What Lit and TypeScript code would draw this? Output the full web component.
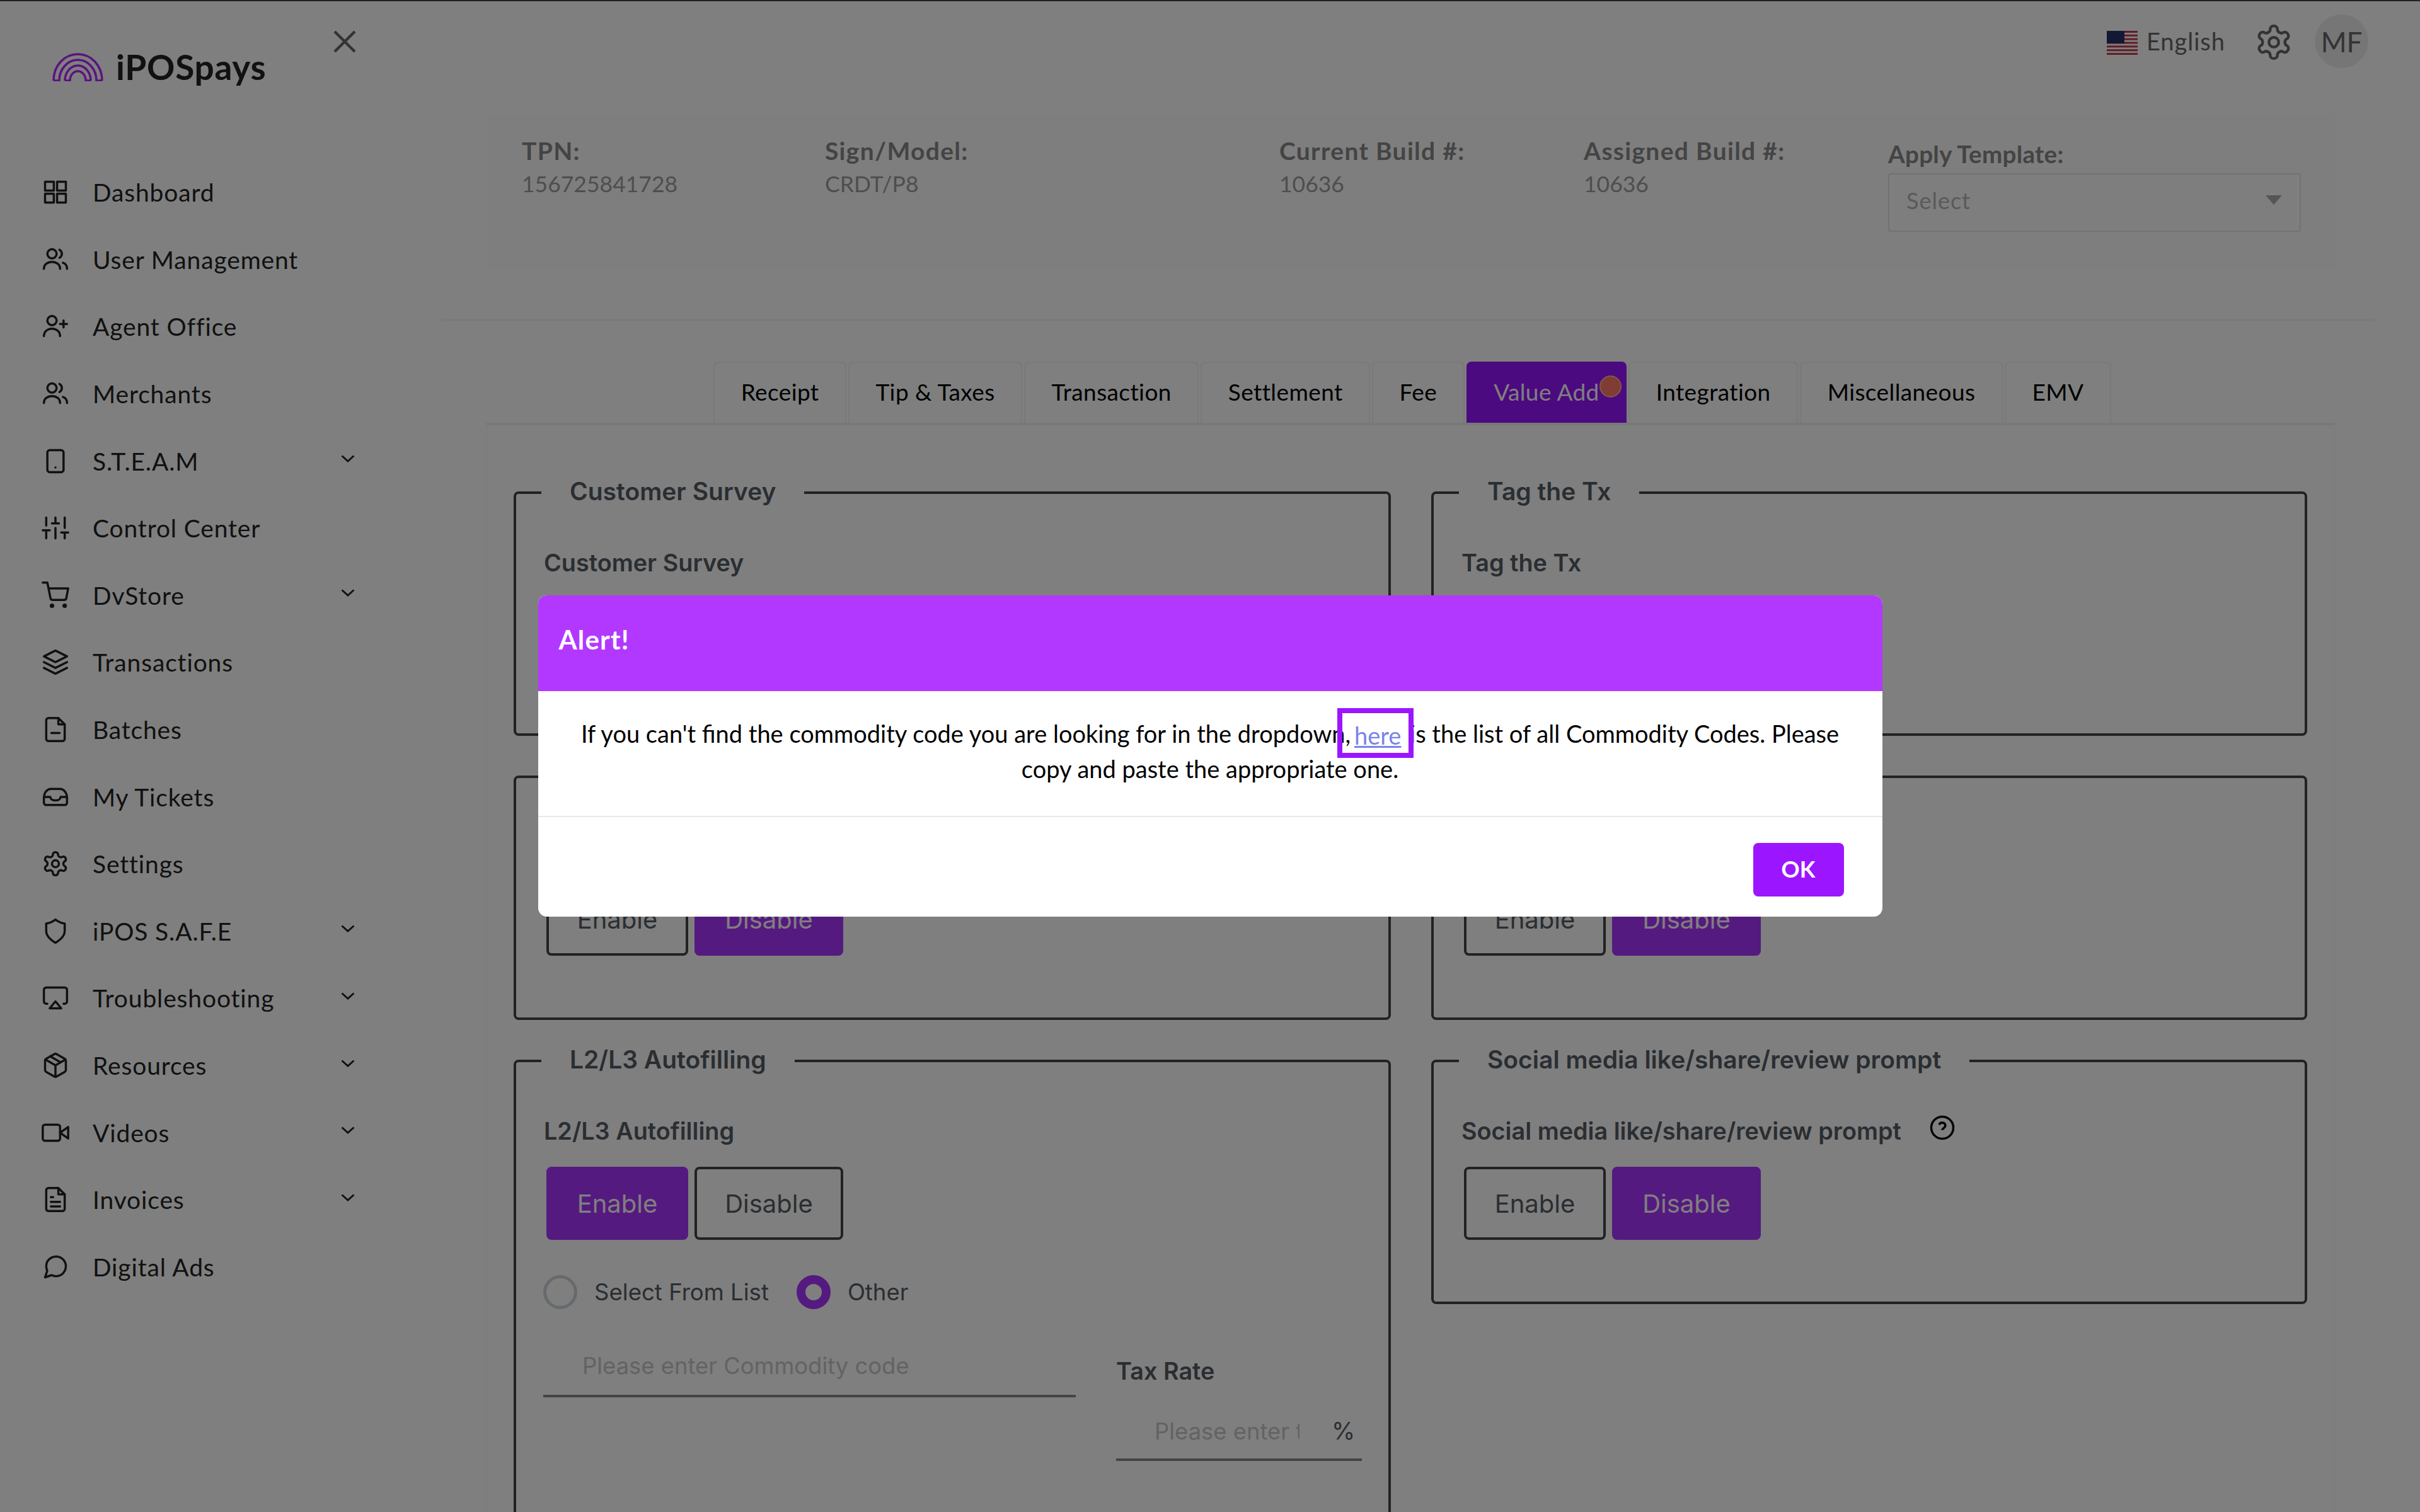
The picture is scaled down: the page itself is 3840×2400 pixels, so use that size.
import { LitElement, html, css, svg } from "lit";
import { customElement } from "lit/decorators.js";

const gear = svg`<path d="M12.22 2h-.44a2 2 0 0 0-2 2v.18a2 2 0 0 1-1 1.73l-.43.25a2 2 0 0 1-2 0l-.15-.08a2 2 0 0 0-2.73.73l-.22.38a2 2 0 0 0 .73 2.73l.15.1a2 2 0 0 1 1 1.72v.51a2 2 0 0 1-1 1.74l-.15.09a2 2 0 0 0-.73 2.73l.22.38a2 2 0 0 0 2.73.73l.15-.08a2 2 0 0 1 2 0l.43.25a2 2 0 0 1 1 1.73V20a2 2 0 0 0 2 2h.44a2 2 0 0 0 2-2v-.18a2 2 0 0 1 1-1.73l.43-.25a2 2 0 0 1 2 0l.15.08a2 2 0 0 0 2.73-.73l.22-.39a2 2 0 0 0-.73-2.73l-.15-.08a2 2 0 0 1-1-1.74v-.5a2 2 0 0 1 1-1.74l.15-.09a2 2 0 0 0 .73-2.73l-.22-.38a2 2 0 0 0-2.73-.73l-.15.08a2 2 0 0 1-2 0l-.43-.25a2 2 0 0 1-1-1.73V4a2 2 0 0 0-2-2z"/><circle cx="12" cy="12" r="3"/>`;
const users = svg`<circle cx="9" cy="7" r="4"/><path d="M2 20c0-3.6 3-6 7-6s7 2.4 7 6"/><path d="M18.5 14.8c2.2.6 3.5 2.6 3.5 5.2"/><path d="M15.5 3.5a4 4 0 0 1 0 7"/>`;

const icons: Record<string, unknown> = {
  dashboard: svg`<rect x="3" y="3" width="7.6" height="7.6"/><rect x="13.4" y="3" width="7.6" height="7.6"/><rect x="3" y="13.4" width="7.6" height="7.6"/><rect x="13.4" y="13.4" width="7.6" height="7.6"/>`,
  users,
  userPlus: svg`<circle cx="9" cy="7" r="4"/><path d="M2 20.5c0-3.8 3-6.5 7-6.5s7 2.7 7 6.5"/><path d="M19 7v6M16 10h6"/>`,
  tablet: svg`<rect x="5" y="2.5" width="14" height="19" rx="2"/><path d="M12 17.5h.01"/>`,
  sliders: svg`<path d="M4 21v-7M4 10V3M12 21v-9M12 8V3M20 21v-5M20 12V3M1 14h6M9 8h6M17 16h6"/>`,
  cart: svg`<circle cx="9" cy="21" r="1"/><circle cx="20" cy="21" r="1"/><path d="M1 1h4l2.68 13.39a2 2 0 0 0 2 1.61h9.72a2 2 0 0 0 2-1.61L23 6H6"/>`,
  layers: svg`<path d="M12 2 2 7l10 5 10-5z"/><path d="m2 17 10 5 10-5"/><path d="m2 12 10 5 10-5"/>`,
  batches: svg`<path d="M14.5 2H6a2 2 0 0 0-2 2v16a2 2 0 0 0 2 2h12a2 2 0 0 0 2-2V7.5z"/><path d="M14.5 2v5.5H20"/><path d="M8.5 15h7"/>`,
  inbox: svg`<path d="M2 17v-4c0-5 3-8 6-8h8c3 0 6 3 6 8v4a2 2 0 0 1-2 2H4a2 2 0 0 1-2-2z"/><path d="M2.5 12h5c.5 2.5 2 3 4.5 3s4-.5 4.5-3h5"/>`,
  gear,
  shield: svg`<path d="M12 22s8-4 8-10V5.5C17 5 14.500 4 12 2 9.500 4 7 5 4 5.500V12c0 6 8 10 8 10z"/>`,
  airplay: svg`<path d="M5 17H4a2 2 0 0 1-2-2V5a2 2 0 0 1 2-2h16a2 2 0 0 1 2 2v10a2 2 0 0 1-2 2h-1"/><path d="m12 15 5 6H7z"/>`,
  box: svg`<path d="M21 16V8a2 2 0 0 0-1-1.730l-7-4a2 2 0 0 0-2 0l-7 4A2 2 0 0 0 3 8v8a2 2 0 0 0 1 1.730l7 4a2 2 0 0 0 2 0l7-4A2 2 0 0 0 21 16z"/><path d="M3.300 7 12 12l8.700-5M12 22V12M7.500 4.200l9 5.200"/>`,
  video: svg`<path d="m23 7-7 5 7 5z"/><rect x="1" y="5" width="15" height="14" rx="2"/>`,
  file: svg`<path d="M14.500 2H6a2 2 0 0 0-2 2v16a2 2 0 0 0 2 2h12a2 2 0 0 0 2-2V7.500z"/><path d="M14.500 2v5.500H20"/><path d="M8 10h2M8 14h8M8 18h8"/>`,
  chat: svg`<path d="M21 11.500a8.380 8.380 0 0 1-.9 3.800 8.500 8.500 0 0 1-7.600 4.700 8.380 8.380 0 0 1-3.800-.9L3 21l1.900-5.700a8.380 8.380 0 0 1-.9-3.800 8.500 8.500 0 0 1 4.700-7.600 8.380 8.380 0 0 1 3.800-.9h.5a8.480 8.480 0 0 1 8 8z"/>`,
};

const nav: [string, string, boolean][] = [
  ["dashboard", "Dashboard", false],
  ["users", "User Management", false],
  ["userPlus", "Agent Office", false],
  ["users", "Merchants", false],
  ["tablet", "S.T.E.A.M", true],
  ["sliders", "Control Center", false],
  ["cart", "DvStore", true],
  ["layers", "Transactions", false],
  ["batches", "Batches", false],
  ["inbox", "My Tickets", false],
  ["gear", "Settings", false],
  ["shield", "iPOS S.A.F.E", true],
  ["airplay", "Troubleshooting", true],
  ["box", "Resources", true],
  ["video", "Videos", true],
  ["file", "Invoices", true],
  ["chat", "Digital Ads", false],
];

const tabs = ["Receipt", "Tip & Taxes", "Transaction", "Settlement", "Fee", "Value Add", "Integration", "Miscellaneous", "EMV"];

@customElement("app-root")
export class AppRoot extends LitElement {
  static styles = css`
    :host { display: block; width: 3840px; height: 2400px; overflow: hidden; position: relative; background: #fff; font-family: "Lato", "Liberation Sans", sans-serif; color: #222; }
    * { box-sizing: border-box; }
    .page { display: flex; width: 3840px; height: 2400px; }

    .side { width: 640px; flex: none; display: flex; flex-direction: column; box-shadow: 1px 0 0 #fafafa; }
    .brand { height: 252px; flex: none; display: flex; justify-content: space-between; align-items: flex-start; padding: 48px 75px 0 83px; }
    .logo { display: flex; align-items: flex-start; gap: 20px; margin-top: 36px; }
    .arch { width: 81px; height: 45px; }
    .word { font-size: 55px; font-weight: 700; line-height: 52px; letter-spacing: .7px; color: #222; margin-top: -4px; }
    .close { width: 36px; height: 36px; stroke: #666; stroke-width: 4.5; fill: none; }
    .row { height: 106.6px; flex: none; display: flex; align-items: center; padding: 0 77px 0 66px; font-size: 39px; letter-spacing: .85px; color: #222; }
    .row .ic { width: 44px; height: 44px; flex: none; margin-right: 37px; fill: none; stroke: #222; stroke-width: 1.900; stroke-linecap: round; stroke-linejoin: round; }
    .row span { flex: 1; white-space: nowrap; }
    .chev { width: 22px; height: 12px; fill: none; stroke: #222; stroke-width: 3; margin-top: -7px; }

    .main { flex: 1; min-width: 0; padding: 0 70px 0 60px; background: #fefefe; }
    .top { height: 183px; display: flex; justify-content: flex-end; align-items: flex-start; padding: 23px 12px 0 0; }
    .flag { width: 49px; height: 38px; margin: 26px 14px 0 0; }
    .lang { font-size: 38px; line-height: 84px; color: #666; letter-spacing: 1px; margin-right: 46px; }
    .tgear { width: 62px; height: 62px; margin: 13px 34px 0 0; fill: none; stroke: #666; stroke-width: 1.700; stroke-linejoin: round; }
    .avatar { width: 85px; height: 85px; border-radius: 50%; background: #ececec; color: #666; font-size: 44px; display: flex; align-items: center; justify-content: center; }

    .info { height: 243px; margin: 0 65px 0 73px; background: #fcfcfc; display: grid; grid-template-columns: 481px 721px 483px 483px 655px; padding: 32px 0 0 55px; }
    .info b { display: block; font-size: 39px; font-weight: 700; line-height: 48px; color: #888; letter-spacing: 1.300px; white-space: nowrap; }
    .info i { display: block; font-style: normal; font-size: 35.500px; line-height: 52px; margin-top: 3px; color: #9c9c9c; }
    .tpl b { margin-top: 6px; line-height: 46px; letter-spacing: .3px; font-size: 38.500px; }
    .select { height: 93px; margin-top: 8px; border: 2px solid #e4e4e4; border-radius: 4px; display: flex; align-items: center; justify-content: space-between; padding: 0 28px 8px 27px; font-size: 36px; color: #b4b4b4; letter-spacing: 1px; }
    .select em { width: 0; height: 0; border-left: 13px solid transparent; border-right: 13px solid transparent; border-top: 15px solid #aaa; }
    .hr { height: 2px; background: #f3f3f3; margin-top: 81px; }

    .tabs { display: flex; justify-content: center; gap: 3px; margin-top: 65px; height: 100px; padding-left: 12px; }
    .tab { height: 97px; padding: 0 41.500px; border: 2px solid #f2f2f2; border-bottom: 0; border-radius: 8px 8px 0 0; font-size: 37px; line-height: 92px; color: #000; position: relative; letter-spacing: .4px; }
    .tab.on { background: #9614ff; border-color: #9614ff; color: #fff; }
    .tab.on::after { content: ""; position: absolute; right: 6px; top: 20px; width: 31px; height: 31px; border-radius: 50%; background: #ff7a66; border: 2px solid #ffb0a0; }

    .panel { margin: -3px 65px 0 71px; border: 1px solid #f2f2f2; border-top: 4px solid #f0f0f0; padding: 83px 43px 0 43px; display: grid; grid-template-columns: 1392px 1390px; column-gap: 64px; row-gap: 41px; align-items: start; }
    fieldset { margin: 0; padding: 0 43px; border: 4px solid #444; border-radius: 8px; min-width: 0; height: 410px; }
    fieldset.tall { height: 900px; }
    legend { margin-left: -3px; padding: 0 45px; height: 48px; font-family: "Inter", sans-serif; font-weight: 600; font-size: 39px; line-height: 44px; color: #555c64; white-space: nowrap; }
    .lab { display: flex; align-items: center; gap: 44px; height: 50px; margin: 62px 0 32px 1px; font-family: "Inter", sans-serif; font-weight: 600; font-size: 37.800px; color: #555c64; white-space: nowrap; }
    .help { width: 42px; height: 42px; margin-top: -10px; fill: none; stroke: #000; stroke-width: 2; }
    .btns { display: flex; gap: 10px; margin-left: 5px; }
    button { font-family: "Inter", sans-serif; font-size: 40px; height: 116px; padding: 0; border-radius: 8px; background: transparent; border: 4px solid #444; color: #555c64; }
    button.en { width: 225px; }
    button.dis { width: 236px; }
    button.on { background: #aa34ff; border-color: #aa34ff; color: #fff; }
    .radios { display: flex; align-items: center; height: 54px; margin-top: 56px; font-family: "Inter", sans-serif; font-size: 36.600px; color: #555c64; }
    .radio { width: 54px; height: 54px; border-radius: 50%; border: 5px solid #cfd4da; margin-right: 27px; flex: none; }
    .radio.on { border: 14px solid #aa34ff; margin-left: 44px; }
    .inputs { display: grid; grid-template-columns: 845px 390px; column-gap: 64px; margin-top: 48px; }
    input { border: 0; outline: 0; background: transparent; height: 86px; font-family: "Inter", sans-serif; font-size: 36.400px; padding: 0 0 2px 62px; }
    input::placeholder { color: #c6c6c6; opacity: 1; }
    .u { border-bottom: 4px solid #888; height: 92px; display: flex; }
    .u input { width: 100%; }
    .tl { padding-top: 25px; font-family: "Inter", sans-serif; font-weight: 600; font-size: 37.800px; line-height: 50px; color: #555c64; }
    .tax { margin-top: 26px; align-items: center; }
    .tax input { width: 291px; padding: 2px 0 0 61px; flex: none; }
    .tax span { margin-left: 51px; font-family: "Inter", sans-serif; font-size: 38px; color: #555c64; }

    .back { position: absolute; inset: 0; background: rgba(0,0,0,.5); display: flex; align-items: center; justify-content: center; box-shadow: inset 0 2px 0 #222; }
    .modal { width: 2133px; height: 510px; background: #fff; border-radius: 14px; overflow: hidden; display: flex; flex-direction: column; }
    .mh { height: 152px; flex: none; background: #b338ff; color: #fff; font-weight: 700; font-size: 42px; letter-spacing: 1.2px; display: flex; align-items: center; padding: 0 33px 12px; }
    .mb { height: 200px; flex: none; padding: 39px 32px 0; border-bottom: 2px solid #e9e9e9; text-align: center; font-size: 38px; line-height: 56px; color: #000; }
    .mb a { position: relative; left: -4px; color: #7b83eb; text-decoration: underline; vertical-align: -3px; line-height: 1; }
    .mb a::after { content: ""; position: absolute; left: -27px; right: -20px; top: -20px; bottom: -13px; border: 8px solid #9b16ff; }
    .mf { flex: 1; display: flex; justify-content: flex-end; align-items: flex-start; padding: 41px 61px 0 0; }
    .ok { width: 144px; height: 85px; border: 0; border-radius: 8px; background: #9b16ff; color: #fff; font-family: "Lato", sans-serif; font-weight: 700; font-size: 36px; padding-bottom: 4px; }
  `;

  private box(title: string, enableOn: boolean | null, opts: { help?: boolean; extra?: unknown; tall?: boolean; showLabel?: boolean } = {}) {
    return html`<fieldset class=${opts.tall ? "tall" : ""}>
      <legend>${title}</legend>
      <div class="lab">${opts.showLabel === false ? "" : title}${opts.help
        ? html`<svg class="help" viewBox="0 0 24 24"><circle cx="12" cy="12" r="10"/><path d="M9.200 9.300a2.900 2.900 0 0 1 5.600.9c0 1.900-2.800 2.400-2.800 4"/><path d="M12 17.500h.01"/></svg>`
        : ""}</div>
      ${enableOn === null
        ? ""
        : html`<div class="btns">
            <button class="en ${enableOn ? "on" : ""}">Enable</button>
            <button class="dis ${enableOn ? "" : "on"}">Disable</button>
          </div>`}
      ${opts.extra ?? ""}
    </fieldset>`;
  }

  render() {
    const autofill = html`
      <div class="radios"><div class="radio"></div>Select From List<div class="radio on"></div>Other</div>
      <div class="inputs">
        <div class="u"><input placeholder="Please enter Commodity code" /></div>
        <div>
          <div class="tl">Tax Rate</div>
          <div class="u tax"><input placeholder="Please enter tax rate" /><span>%</span></div>
        </div>
      </div>`;
    return html`
      <div class="page">
        <aside class="side">
          <div class="brand">
            <div class="logo">
              <svg class="arch" viewBox="0 0 81 45" fill="none" stroke="#b526ff" stroke-width="3.500">
                <path d="M2 44C2 20 19 2 40.500 2S79 20 79 44"/>
                <path d="M2 44h9C11 26 24 11 40.500 11S70 26 70 44h9"/>
                <path d="M20 44C20 31 29 20 40.500 20S61 31 61 44"/>
                <path d="M20 44h8C28 36 33 29 40.500 29S53 36 53 44h8"/>
              </svg>
              <div class="word">iPOSpays</div>
            </div>
            <svg class="close" viewBox="0 0 36 36"><path d="M2 2l32 32M34 2L2 34"/></svg>
          </div>
          ${nav.map(([ic, label, more]) => html`<div class="row">
            <svg class="ic" viewBox="0 0 24 24">${icons[ic]}</svg>
            <span>${label}</span>
            ${more ? html`<svg class="chev" viewBox="0 0 22 12"><path d="M1.500 1.500 11 10l9.500-8.500"/></svg>` : ""}
          </div>`)}
        </aside>
        <main class="main">
          <div class="top">
            <svg class="flag" viewBox="0 0 49 38">
              <rect width="49" height="38" fill="#fff"/>
              ${[0, 1, 2, 3, 4, 5, 6].map((i) => svg`<rect y=${i * 5.85} width="49" height="2.930" fill="#c0364a"/>`)}
              <rect width="28" height="20" fill="#27306b"/>
            </svg>
            <div class="lang">English</div>
            <svg class="tgear" viewBox="0 0 24 24">${gear}</svg>
            <div class="avatar">MF</div>
          </div>
          <section class="info">
            <div><b>TPN:</b><i>156725841728</i></div>
            <div><b>Sign/Model:</b><i>CRDT/P8</i></div>
            <div><b>Current Build #:</b><i>10636</i></div>
            <div><b>Assigned Build #:</b><i>10636</i></div>
            <div class="tpl"><b>Apply Template:</b><div class="select">Select<em></em></div></div>
          </section>
          <div class="hr"></div>
          <nav class="tabs">
            ${tabs.map((t) => html`<div class="tab ${t === "Value Add" ? "on" : ""}">${t}</div>`)}
          </nav>
          <section class="panel">
            ${this.box("Customer Survey", null)}
            ${this.box("Tag the Tx", null)}
            ${this.box("", false, { showLabel: false })}
            ${this.box("", false, { showLabel: false })}
            ${this.box("L2/L3 Autofilling", true, { extra: autofill, tall: true })}
            ${this.box("Social media like/share/review prompt", false, { help: true })}
          </section>
        </main>
      </div>
      <div class="back">
        <div class="modal">
          <div class="mh">Alert!</div>
          <div class="mb">If you can't find the commodity code you are looking for in the dropdown, <a>here</a> is the list of all Commodity Codes. Please copy and paste the appropriate one.</div>
          <div class="mf"><button class="ok">OK</button></div>
        </div>
      </div>
    `;
  }
}
